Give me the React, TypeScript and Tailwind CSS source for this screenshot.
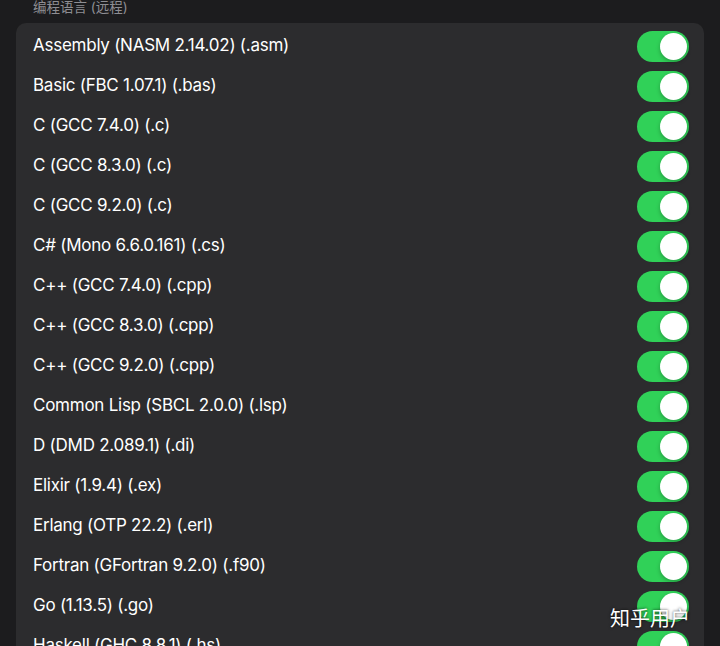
import React from "react";

const langs = [
  "Assembly (NASM 2.14.02) (.asm)",
  "Basic (FBC 1.07.1) (.bas)",
  "C (GCC 7.4.0) (.c)",
  "C (GCC 8.3.0) (.c)",
  "C (GCC 9.2.0) (.c)",
  "C# (Mono 6.6.0.161) (.cs)",
  "C++ (GCC 7.4.0) (.cpp)",
  "C++ (GCC 8.3.0) (.cpp)",
  "C++ (GCC 9.2.0) (.cpp)",
  "Common Lisp (SBCL 2.0.0) (.lsp)",
  "D (DMD 2.089.1) (.di)",
  "Elixir (1.9.4) (.ex)",
  "Erlang (OTP 22.2) (.erl)",
  "Fortran (GFortran 9.2.0) (.f90)",
  "Go (1.13.5) (.go)",
  "Haskell (GHC 8.8.1) (.hs)",
];

function Toggle() {
  return (
    <div className="w-[52px] h-[31px] rounded-full bg-[#30d158] flex items-center justify-end px-[2px]">
      <div className="w-[27px] h-[27px] rounded-full bg-white shadow-[0_2px_4px_rgba(0,0,0,0.25)]" />
    </div>
  );
}

export default function App() {
  return (
    <div
      className="relative w-[720px] h-[646px] overflow-hidden bg-[#1c1c1e]"
      style={{ fontFamily: 'Inter, "Noto Sans CJK SC", sans-serif' }}
    >
      <div className="h-[23px] pl-[33px] text-[13.5px] leading-[14px] text-[#8e8e93]">
        编程语言 (远程)
      </div>
      <div className="mx-[16px] rounded-[10px] bg-[#2c2c2e] pt-[3px]">
        {langs.map((l) => (
          <div key={l} className="h-[40px] flex items-center justify-between pl-[17px] pr-[15px]">
            <span className="text-[17px] text-white tracking-[-0.25px]">{l}</span>
            <Toggle />
          </div>
        ))}
      </div>
      <div
        className="absolute left-[610px] top-[606px] text-[20px] leading-[26px] text-white"
        style={{ textShadow: "0 0 3px rgba(0,0,0,0.8)" }}
      >
        知乎用户
      </div>
    </div>
  );
}
